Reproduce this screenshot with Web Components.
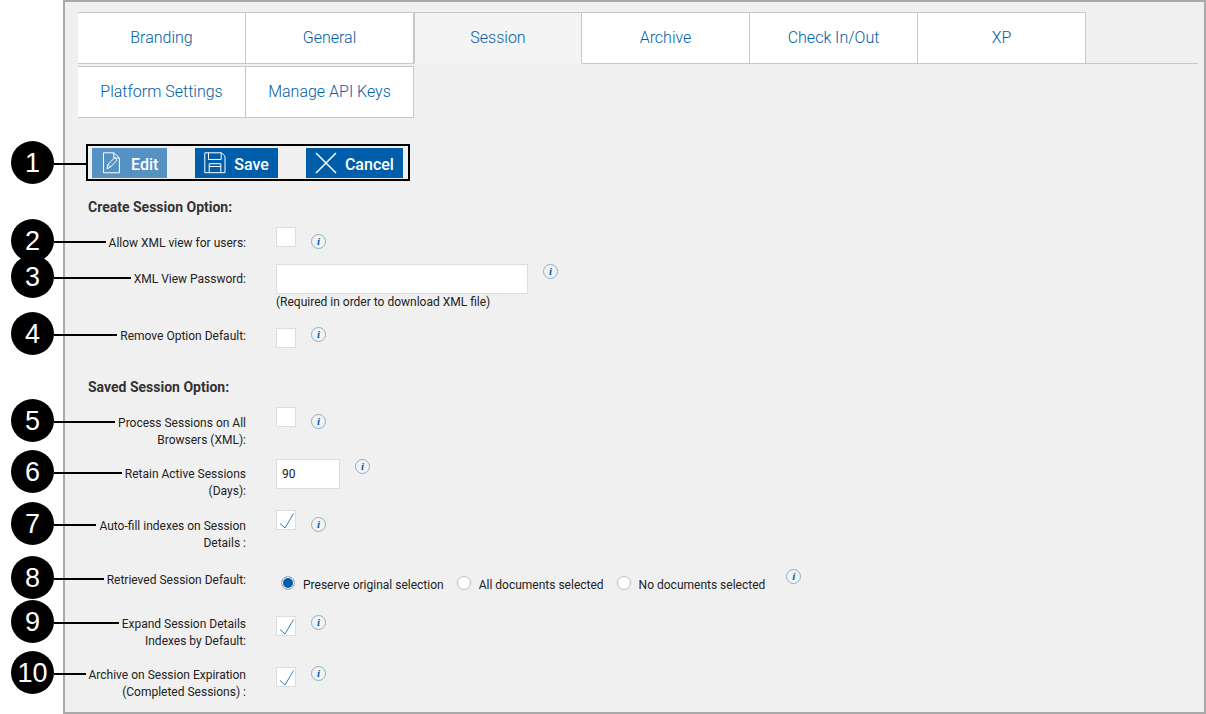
<!DOCTYPE html>
<html lang="en">
<head>
<meta charset="utf-8">
<meta name="viewport" content="width=device-width, initial-scale=1">
<title>Session settings</title>
<style>
  body { margin: 0; background: #fff; color: #222; font: 12px/17px Roboto, "Liberation Sans", sans-serif; }
</style>
</head>
<body>
<settings-panel>
  <settings-tabs slot="tabs"></settings-tabs>
  <settings-toolbar></settings-toolbar>
  <section-title>Create Session Option:</section-title>
  <setting-row number="2" label="Allow XML view for users:" kind="checkbox" raised></setting-row>
  <setting-row number="3" label="XML View Password:" kind="text" hint="(Required in order to download XML file)"></setting-row>
  <setting-row number="4" label="Remove Option Default:" kind="checkbox"></setting-row>
  <section-title>Saved Session Option:</section-title>
  <setting-row number="5" label="Process Sessions on All|Browsers (XML):" kind="checkbox" raised></setting-row>
  <setting-row number="6" label="Retain Active Sessions|(Days):" kind="text" value="90" short></setting-row>
  <setting-row number="7" label="Auto-fill indexes on Session|Details :" kind="checkbox" raised checked></setting-row>
  <setting-row number="8" label="Retrieved Session Default:" kind="radio" options="Preserve original selection|All documents selected|No documents selected"></setting-row>
  <setting-row number="9" label="Expand Session Details|Indexes by Default:" kind="checkbox" checked></setting-row>
  <setting-row number="10" label="Archive on Session Expiration|(Completed Sessions) :" kind="checkbox" checked></setting-row>
</settings-panel>

<script>
class SettingsPanel extends HTMLElement {
  constructor() {
    super();
    this.attachShadow({ mode: "open" }).innerHTML = `
      <style>
        :host { display: block; box-sizing: border-box; min-height: 100vh; margin-left: 63px;
                border: 2px solid #a9a9a9; background: #f0f0f0; }
        header { padding: 10px 6px 26px 13px; }
        /* the numbered callouts start in the margin left of the frame */
        main { display: flex; flex-direction: column; gap: 10px; margin-left: -54px; padding-bottom: 10px; }
      </style>
      <header><slot name="tabs"></slot></header>
      <main><slot></slot></main>`;
  }
}

class SettingsTabs extends HTMLElement {
  constructor() {
    super();
    const tab = t => `<a href="#"${t === "Session" ? ' class="on" aria-current="page"' : ""}>${t}</a>`;
    this.attachShadow({ mode: "open" }).innerHTML = `
      <style>
        :host { display: block; }
        nav { display: flex; flex-wrap: wrap; row-gap: 2px; }
        a { box-sizing: border-box; width: 168px; height: 52px; border: 1px solid #c8c8c8; border-left: 0;
            background: #fff; color: #005da9; font-size: 16px; font-weight: 300; line-height: 50px;
            text-align: center; text-decoration: none; }
        .on { background: #f4f4f4; border-left: 1px solid #c8c8c8; border-bottom-color: #f4f4f4; }
        .rest { flex: 1; border-bottom: 1px solid #c8c8c8; }
      </style>
      <nav>${["Branding", "General", "Session", "Archive", "Check In/Out", "XP"].map(tab).join("")}<span
        class="rest"></span>${["Platform Settings", "Manage API Keys"].map(tab).join("")}</nav>`;
  }
}

class CalloutMark extends HTMLElement {
  connectedCallback() {
    if (this.shadowRoot) return;
    this.attachShadow({ mode: "open" }).innerHTML = `
      <style>
        :host { display: flex; align-items: center; height: 43px; }
        b { flex: none; width: 43px; height: 43px; border-radius: 50%; background: #000; color: #fff;
            font: 27px/45px "Liberation Sans", Arial, sans-serif; text-align: center; }
        i { flex: 1; height: 2px; margin-top: 2px; background: #000; }
      </style>
      <b>${this.getAttribute("number")}</b><i></i>`;
  }
}

class SettingsToolbar extends HTMLElement {
  constructor() {
    super();
    this.attachShadow({ mode: "open" }).innerHTML = `
      <style>
        :host { display: flex; align-items: center; height: 37px; margin-bottom: 6px; }
        callout-mark { width: 75px; }
        .box { display: flex; gap: 28px; padding: 2px 5px 1px 4px; border: 2px solid #000; }
        button { display: flex; align-items: center; gap: 8px; height: 30px; margin: 0; padding: 0 9px;
                 border: 0; background: #005da9; color: #fff; font: 500 16px/20px Roboto, sans-serif; }
        button.soft { background: #5591c2; }
        span { padding-top: 4px; }
        svg { width: 22px; height: 22px; fill: none; stroke: #fff; }
      </style>
      <callout-mark number="1"></callout-mark>
      <div class="box" role="toolbar">
        <button type="button" class="soft"><svg viewBox="0 0 22 22"><path d="M2.5.8H13L18.4 6v14.8H2.5zM12.8.8V6h5.6"/><path d="M6 16.800l1-4.300 6-6.200c1.600-.8 3.200.8 2.500 2.500l-6 6.200zM7 12.500l2.500 2.500"/></svg><span>Edit</span></button>
        <button type="button"><svg viewBox="0 0 22 22"><path d="M.8.8h16.700l3.500 3.400v16.500H.8z"/><path d="M4.500.8v6.700h12.700V.8M5.200 20.500v-8.800h11.600v8.800M5.200 14.500h11.600"/></svg><span>Save</span></button>
        <button type="button"><svg viewBox="0 0 22 22"><path stroke-width="1.500" d="M1 1l20 20M21 1L1 21"/></svg><span>Cancel</span></button>
      </div>`;
  }
}

class SectionTitle extends HTMLElement {
  constructor() {
    super();
    this.attachShadow({ mode: "open" }).innerHTML = `
      <style>
        :host { display: block; padding-left: 77px; }
        :host(:not(:first-of-type)) { margin-top: 19px; }
        h2 { margin: 0; color: #333; font-size: 14px; font-weight: 700; line-height: 20px; }
      </style>
      <h2><slot></slot></h2>`;
  }
}

class InfoButton extends HTMLElement {
  constructor() {
    super();
    this.attachShadow({ mode: "open" }).innerHTML = `
      <style>
        :host { display: block; flex: none; width: 15px; height: 15px; }
        button { display: block; box-sizing: border-box; width: 15px; height: 15px; padding: 0;
                 border: 1px solid #8eafc6; border-radius: 50%; background: #f2f3f4; color: #005da9;
                 font: italic bold 11px/13px "Liberation Serif", serif; text-align: center; }
      </style>
      <button type="button">i</button>`;
  }
}

class SettingRow extends HTMLElement {
  connectedCallback() {
    if (this.shadowRoot) return;
    const at = n => this.getAttribute(n) || "";
    const kind = at("kind");
    const text = at("label").split("|").join("<br>");
    const label = kind === "radio"
      ? `<span class="label" id="label">${text}</span>`
      : `<label class="label" for="field">${text}</label>`;
    let control;
    if (kind === "checkbox") {
      control = `<input type="checkbox" id="field"${this.hasAttribute("checked") ? " checked" : ""}>`;
    } else if (kind === "text") {
      control = `<div class="field"><input type="text" id="field" value="${at("value")}">${
        at("hint") ? `<small>${at("hint")}</small>` : ""}</div>`;
    } else {
      control = `<div class="options" role="radiogroup" aria-labelledby="label">${
        at("options").split("|").map((o, i) =>
          `<label><input type="radio" name="choice"${i ? "" : " checked"}><span>${o}</span></label>`).join("")}</div>`;
    }
    this.attachShadow({ mode: "open" }).innerHTML = `
      <style>
        :host { display: grid; grid-template-columns: 235px 1fr; column-gap: 30px; min-height: 26px; }
        :host([short]) { min-height: 42px; }
        :host([kind=radio]) { min-height: 34px; margin-top: 3px; }
        .lead { display: flex; align-items: flex-start; gap: 3px; }
        callout-mark { flex: 1; margin: -8px 0 -20px; }
        .label { padding-top: 8px; margin-bottom: -1px; text-align: right; white-space: nowrap; }
        .control { display: flex; align-items: flex-start; gap: 15px; }
        info-button { margin-top: 7px; }
        input { appearance: none; box-sizing: border-box; margin: 0; border: 1px solid #ddd; background: #fff; }
        [type=checkbox] { width: 20px; height: 20px; margin-top: 8px; }
        :host([raised]) [type=checkbox] { margin-top: 0; }
        [type=checkbox]:checked { background: #fff url("data:image/svg+xml,%3Csvg xmlns='http://www.w3.org/2000/svg' viewBox='0 0 18 18'%3E%3Cpath d='M3 12.500L8 17 16.500 2.500' fill='none' stroke='%231f6fb2' stroke-width='.9'/%3E%3C/svg%3E"); }
        .field { display: flex; flex-direction: column; margin-top: 1px; }
        [type=text] { width: 252px; height: 30px; padding: 0 5px; color: #222; font: inherit; }
        :host([short]) [type=text] { width: 64px; }
        small { font-size: 12px; line-height: 16px; }
        :host([kind=text]) info-button { margin-top: 1px; }
        .options { display: flex; gap: 13px; padding: 12px 6px 0 5px; }
        .options label { display: flex; align-items: flex-start; gap: 8px; }
        .options span { line-height: 18px; white-space: nowrap; }
        [type=radio] { width: 14px; height: 14px; border-color: #bbb; border-radius: 50%; }
        [type=radio]:checked { background: #005da9; box-shadow: inset 0 0 0 1px #fff; }
        :host([kind=radio]) info-button { margin-top: 5px; }
      </style>
      <div class="lead"><callout-mark number="${at("number")}"></callout-mark>${label}</div>
      <div class="control">${control}<info-button></info-button></div>`;
  }
}

customElements.define("callout-mark", CalloutMark);
customElements.define("info-button", InfoButton);
customElements.define("settings-tabs", SettingsTabs);
customElements.define("settings-toolbar", SettingsToolbar);
customElements.define("section-title", SectionTitle);
customElements.define("setting-row", SettingRow);
customElements.define("settings-panel", SettingsPanel);
</script>
</body>
</html>
